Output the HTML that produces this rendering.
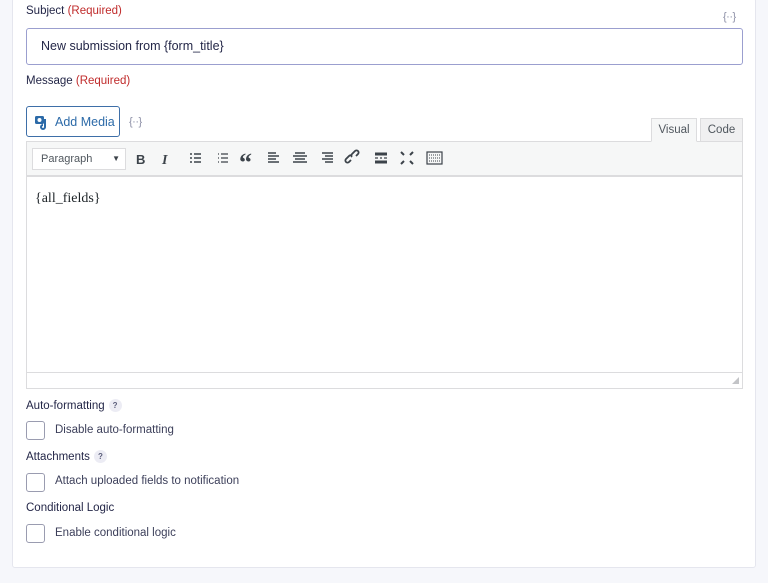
<!DOCTYPE html>
<html><head><style>
*{box-sizing:border-box;margin:0;padding:0}
body{width:768px;height:583px;background:#f6f7fb;font-family:"Liberation Sans",sans-serif;position:relative;overflow:hidden;color:#242748}
.panel{position:absolute;left:12px;top:-2px;width:744px;height:570px;background:#fff;border:1px solid #e5e6ee;border-radius:3px}
.abs{position:absolute}
.lbl{font-size:11.5px;color:#242748}
.req{color:#c02b2b}
.inp{left:26px;top:28px;width:717px;height:37px;border:1px solid #9b9fcf;border-radius:3px;font-size:12.5px;padding:10px 14px;color:#242748}
.merge{font-size:11px;color:#8c8fa6;letter-spacing:-0.5px}
.btn{left:26px;top:106px;width:94px;height:31px;border:1px solid #3e6fa8;border-radius:3px;color:#2c6aa8;font-size:12.5px;padding:8px 0 0 28px}
.tab{top:118px;height:24px;background:#f6f7f7;border:1px solid #dcdcde;font-size:11.5px;color:#50575e;text-align:center;padding-top:5px}
.tb{left:26px;top:141px;width:717px;height:36px;background:#f6f7f7;border:1px solid #dcdcde;border-bottom:2px solid #dcdcde}
.sel{left:32px;top:148px;width:94px;height:22px;background:#fff;border:1px solid #dcdcde;font-size:11px;color:#50575e;padding:4px 0 0 8px}
.ed{left:26px;top:177px;width:717px;height:196px;border-left:1px solid #dcdcde;border-right:1px solid #dcdcde;font-family:"Liberation Serif",serif;font-size:14px;color:#1d2327;padding:14px 8px}
.st{left:26px;top:372px;width:717px;height:17px;border:1px solid #dcdcde;background:#fff}
.cb{left:26px;width:19px;height:19px;border:1px solid #9a9cb0;border-radius:3px}
.q{display:inline-block;width:13px;height:13px;border-radius:50%;background:#ececf4;font-size:8px;text-align:center;line-height:13px;font-weight:bold;color:#5a5d7a;vertical-align:1px;margin-left:4px}
</style></head><body>
<div class="panel"></div>
<div class="abs lbl" style="left:26px;top:5px">Subject <span class="req">(Required)</span></div>
<div class="abs merge" style="left:723px;top:11px">{··}</div>
<div class="abs inp">New submission from {form_title}</div>
<div class="abs lbl" style="left:26px;top:75px">Message <span class="req">(Required)</span></div>
<div class="abs btn">Add Media</div>
<svg class="abs" style="left:34px;top:114px" width="16" height="16" viewBox="0 0 16 16"><rect x="1" y="2" width="9" height="8" rx="1.5" fill="#2c6aa8"/><circle cx="5.5" cy="6" r="2" fill="#fff"/><path d="M11 5v8M11 13a2 2 0 1 1-2-2" stroke="#2c6aa8" stroke-width="2" fill="none"/></svg>
<div class="abs merge" style="left:129px;top:116px">{··}</div>
<div class="abs tab" style="left:651px;width:46px;background:#f6f7f7;border-bottom-color:#f6f7f7;z-index:2">Visual</div>
<div class="abs tab" style="left:700px;width:43px;background:#f0f0f1">Code</div>
<div class="abs tb"></div>
<div class="abs sel">Paragraph<span style="position:absolute;right:5px;top:5px;font-size:8px;color:#3c434a">▼</span></div>
<svg class="abs" style="left:130px;top:148px" width="320" height="22" viewBox="130 148 320 22" fill="none" stroke="#3c434a">
<text x="136" y="164" font-family="Liberation Sans" font-weight="bold" font-size="13" fill="#3c434a" stroke="none">B</text>
<text x="162" y="164" font-family="Liberation Serif" font-style="italic" font-weight="bold" font-size="14" fill="#3c434a" stroke="none">I</text>
<g stroke-width="1.5"><path d="M190 154h2M190 158h2M190 162h2M194 154h7M194 158h7M194 162h7"/>
<path d="M218 154h1M218 158h1M218 162h1M221 154h7M221 158h7M221 162h7" stroke-width="1.2"/>
<path d="M268 153h8M268 156h11M268 159h8M268 162h11"/>
<path d="M295 153h10M293 156h14M295 159h10M293 162h14"/>
<path d="M322 153h11M325 156h8M322 159h11M325 162h8"/></g>
<text x="239" y="171" font-family="Liberation Serif" font-weight="bold" font-size="26" fill="#3c434a" stroke="none">“</text>
<path d="M351 160l-2 2a2 2 0 0 1-3-3l3-3a2 2 0 0 1 3 0M356 156l2-2a2 2 0 0 0-3-3l-3 3a2 2 0 0 0 0 3" stroke-width="1.8"/>
<path d="M375 154h12M375 162h12" stroke-width="3"/><path d="M375 158h3M380 158h2M384 158h3" stroke-width="1.3"/>
<path d="M401 152l3 3M413 152l-3 3M401 164l3-3M413 164l-3-3" stroke-width="2"/>
<rect x="427" y="152" width="15" height="12" stroke-width="1.2"/><path d="M429 155h11M429 158h11M429 161h11" stroke-width="1" stroke-dasharray="1 1"/>
</svg>
<div class="abs ed">{all_fields}</div>
<div class="abs st"></div>
<svg class="abs" style="left:731px;top:376px" width="9" height="9"><path d="M8 1v7H1z" fill="#c3c4c7"/></svg>
<div class="abs lbl" style="left:26px;top:399px">Auto-formatting<span class="q">?</span></div>
<div class="abs cb" style="top:421px"></div>
<div class="abs lbl" style="left:55px;top:424px;color:#3c3f5a">Disable auto-formatting</div>
<div class="abs lbl" style="left:26px;top:450px">Attachments<span class="q">?</span></div>
<div class="abs cb" style="top:473px"></div>
<div class="abs lbl" style="left:55px;top:475px;color:#3c3f5a">Attach uploaded fields to notification</div>
<div class="abs lbl" style="left:26px;top:502px">Conditional Logic</div>
<div class="abs cb" style="top:524px"></div>
<div class="abs lbl" style="left:55px;top:527px;color:#3c3f5a">Enable conditional logic</div>
</body></html>
